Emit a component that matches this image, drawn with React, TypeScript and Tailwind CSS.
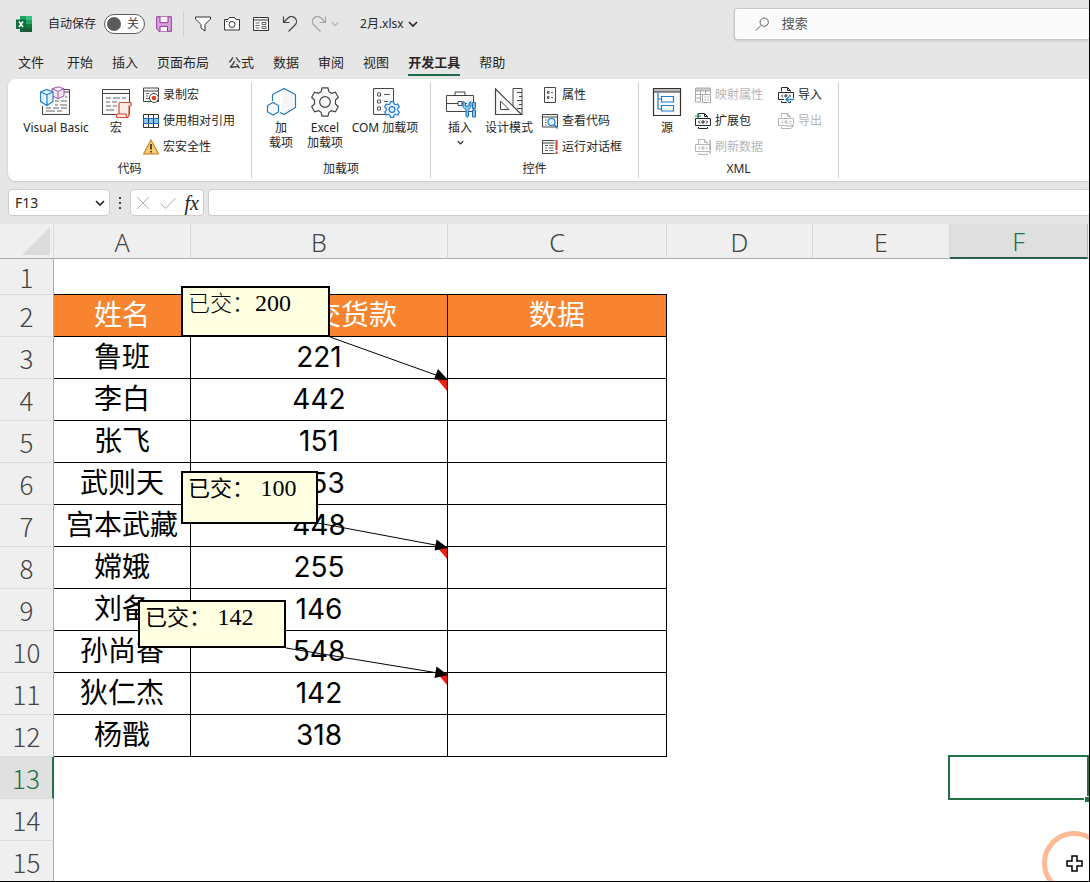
import type { ReactNode } from 'react'
import clsx from 'clsx'

const tabs = ['文件', '开始', '插入', '页面布局', '公式', '数据', '审阅', '视图', '开发工具', '帮助']
const activeTab = '开发工具'

const columns = ['A', 'B', 'C', 'D', 'E', 'F']

const rows: { name: string; amount: string; note?: boolean }[] = [
  { name: '鲁班', amount: '221' },
  { name: '李白', amount: '442', note: true },
  { name: '张飞', amount: '151' },
  { name: '武则天', amount: '253' },
  { name: '宫本武藏', amount: '448' },
  { name: '嫦娥', amount: '255', note: true },
  { name: '刘备', amount: '146' },
  { name: '孙尚香', amount: '548' },
  { name: '狄仁杰', amount: '142', note: true },
  { name: '杨戬', amount: '318' },
]

export default function App() {
  return (
    <div className="flex h-screen flex-col overflow-hidden border-r border-b border-black bg-[#e6e6e6] font-['Noto_Sans','Noto_Sans_CJK_SC',sans-serif] text-xs text-[#262626]">
      <TitleBar />
      <TabBar />
      <Ribbon />
      <FormulaBar />
      <Sheet />
    </div>
  )
}

function TitleBar() {
  return (
    <header className="flex h-12 shrink-0 items-center">
      <div className="flex w-[734px] shrink-0 items-center pl-4">
        <ExcelLogo />
        <label className="ml-4 flex items-center gap-2">
          自动保存
          <span className="relative flex h-5 w-[41px] items-center rounded-full border border-[#5c5c5c] bg-white">
            <input type="checkbox" role="switch" className="absolute inset-0 appearance-none" />
            <span className="ml-[2px] h-[14px] w-[14px] rounded-full bg-[#5c5c5c]"></span>
            <span className="ml-[6px] text-xs leading-none text-[#444]">关</span>
          </span>
        </label>
        <IconButton label="保存" className="ml-[11px]">
          <Icon>
            <path d="M.7.7h14.6v14.6H3L.7 13z" fill="#d9a3dc" stroke="#93379b" />
            <path d="M4 .7v6h8v-6M4 15.3v-5h7.500v5" fill="#f3f3f3" stroke="#93379b" />
          </Icon>
        </IconButton>
        <span className="ml-[11px] h-6 w-px bg-[#cfcfcf]"></span>
        <div className="ml-[11px] flex items-center gap-[13px]">
          <IconButton label="筛选">
            <Icon>
              <path d="M.5 1h15v2L10 8.500v6.500L6 12V8.500L.5 3z" fill="#fff" stroke="#333" />
            </Icon>
          </IconButton>
          <IconButton label="照相机">
            <Icon>
              <path d="M.5 3.500h3.500L5.500 1.500h5L12 3.500h3.500v10.500H.5z" fill="#fff" stroke="#333" />
              <circle cx="8" cy="8.500" r="3" fill="none" stroke="#333" />
              <path d="M2 5.500h1.500" stroke="#333" />
            </Icon>
          </IconButton>
          <IconButton label="记录单">
            <Icon>
              <path d="M.5 1.500h15v13H.5zM.5 4h15" fill="#fff" stroke="#333" />
              <path d="M2.500 7h4M2.500 9.500h4M2.500 12h4M9 6.500h4v2H9zM9 10.500h4v2H9z" fill="none" stroke="#666" />
            </Icon>
          </IconButton>
          <IconButton label="撤消">
            <Icon>
              <path d="M1.500.5v6h6M1.500 6.500 6 2c2-2 5-2 7 0s2 5 0 7l-6.500 6.500" fill="none" stroke="#444" strokeWidth="1.200" />
            </Icon>
          </IconButton>
          <IconButton label="恢复" disabled>
            <Icon>
              <path d="M14.500.5v6h-6M14.500 6.500 10 2C8 0 5 0 3 2S1 7 3 9l6.500 6.500" fill="none" stroke="#a3a3a3" strokeWidth="1.200" />
            </Icon>
          </IconButton>
        </div>
        <Chevron className="ml-1 h-2 w-2 text-[#b3b3b3]" />
        <button type="button" className="ml-[21px] flex items-center gap-1 text-xs">
          2月.xlsx
          <Chevron className="h-[10px] w-[10px]" />
        </button>
      </div>
      <label className="flex h-8 flex-1 items-center rounded-l border border-r-0 border-[#c8c8c8] bg-[#fafafa] pl-5 shadow-sm">
        <svg viewBox="0 0 16 16" className="h-4 w-4" fill="none" stroke="#555">
          <circle cx="10" cy="6" r="4.500" />
          <path d="M6.500 9.500.8 15.200" />
        </svg>
        <input
          type="search"
          aria-label="搜索"
          placeholder="搜索"
          className="ml-3 w-full bg-transparent text-[13px] outline-none placeholder:text-[#555]"
        />
      </label>
    </header>
  )
}

function TabBar() {
  return (
    <nav className="flex h-[31px] shrink-0 items-start gap-[19px] pl-[18px] text-[13px]">
      {tabs.map((tab) => (
        <button
          key={tab}
          type="button"
          className={clsx(
            'h-7 border-b-2 pt-1 whitespace-nowrap',
            tab === '文件' && 'mr-1',
            tab === activeTab ? 'border-[#1e6b4a] font-bold' : 'border-transparent',
          )}
        >
          {tab}
        </button>
      ))}
    </nav>
  )
}

function Ribbon() {
  return (
    <section className="ml-2 flex h-[102px] shrink-0 rounded-l-lg bg-white py-[3px] shadow-sm">
      <Group label="代码" className="w-[244px]">
        <BigButton lines={['Visual Basic']} className="ml-[11px] w-[74px]">
          <path d="M20 3.500h9.500v25h-27V18l10-6z" fill="#fafafa" />
          <path d="M24 3.500h5.500v25h-27V20M24 6h5.500" stroke="#444" />
          <path d="M25 11h2M15 15h4M21 15h6M15 19h3M20 19h7M6 22h5M13 22h6M21 22h6M6 25h9M17 25h5" stroke="#666" />
          <path d="m18 .8 6 2v7l-6 3-6-3v-7zM12 2.800l6 2.500 6-2.500M18 5.300v7.500" fill="#f4e6f5" stroke="#a34fb0" />
          <path d="m7 3.500 6 2.500v9.500l-6 4-6.500-4V6zM.5 6 7 8.500 13 6M7 8.500v11" fill="#e4f2fc" stroke="#2382c9" strokeWidth="1.200" />
        </BigButton>
        <BigButton lines={['宏']} className="w-[46px]">
          <path d="M2.500 3.500h27v25h-27zM2.500 7.500h27" fill="#fafafa" stroke="#444" />
          <path d="M6 12h5M13 12h7M22 12h4M6 16h4M12 16h5M6 20h5M13 20h4M6 24h8" stroke="#666" />
          <path
            d="M20 16.500h10.500c1 0 1 3.500 0 3.500H29v9c0 2-1 2.500-2.500 2.500h-9c-1.500 0-1.500-3.500 0-3.500H19V18c0-1 .5-1.500 1-1.500zM17.500 28h8.500c0 2 .5 3 1.500 3.500"
            fill="#fdece8"
            stroke="#d8492f"
            strokeWidth="1.200"
          />
        </BigButton>
        <div className="ml-1">
          <SmallButton label="录制宏">
            <path d="M.5 1h15v13.500H.5zM.5 4h15" fill="#fafafa" stroke="#444" />
            <path d="M3 6.500h3M3 9h2M3 11.500h3" stroke="#666" />
            <circle cx="11" cy="11" r="4.500" fill="#fff" stroke="#444" />
            <circle cx="11" cy="11" r="2.300" fill="#e03c1e" />
          </SmallButton>
          <SmallButton label="使用相对引用">
            <path d="M.5 1.500h15v13H.5z" fill="#fff" />
            <path d="M.5 5.500h15v5H.5z" fill="#83c5f3" />
            <path d="M.5 1.500h15v13H.5zM.5 5.500h15M.5 10.500h15M5.500 1.500v13M10.500 1.500v13" fill="none" stroke="#333" />
            <path d="M.5 5.500h15v5H.5z" fill="none" stroke="#1e6fb8" />
          </SmallButton>
          <SmallButton label="宏安全性">
            <path d="M8 1 15.300 14.800H.7z" fill="#fbd075" stroke="#cf8420" strokeWidth="1.200" />
            <path d="M8 5v5.500M8 12v1.500" stroke="#222" strokeWidth="1.500" />
          </SmallButton>
        </div>
      </Group>

      <Group label="加载项" className="w-[179px]">
        <BigButton lines={['加', '载项']} className="ml-[5px] w-12">
          <path d="m19 2.500 11.500 6v13L19 28.500l-4-2M7.500 14V8.500z" fill="#f5f5f5" />
          <path d="M7.500 15V8.500L19 2.500l11.500 6v13L19 28.500l-4-2" fill="none" stroke="#2579bd" strokeWidth="1.200" />
          <path d="m8 16.500 5.500 3v6.500L8 29l-5.500-3v-6.500z" fill="#f8fbfd" stroke="#2579bd" strokeWidth="1.200" />
        </BigButton>
        <BigButton lines={['Excel', '加载项']} className="w-10">
          <g transform="translate(16 16) scale(1.180) translate(-12 -12)" fill="#fafafa" stroke="#444">
            <GearShape />
          </g>
        </BigButton>
        <BigButton lines={['COM 加载项']} className="w-20">
          <path d="M4.500 2.500h20v26h-20z" fill="#fafafa" stroke="#444" />
          <path d="M8.500 7h3v3h-3zM8.500 14h3v3h-3zM8.500 21h3v3h-3zM15 8.500h6M15 15.500h4" fill="none" stroke="#555" />
          <g transform="translate(23 23.500) scale(.65) translate(-12 -12)" fill="#e6f3fc" stroke="#1c7cd0" strokeWidth="1.800">
            <GearShape />
          </g>
        </BigButton>
      </Group>

      <Group label="控件" className="w-[208px]">
        <BigButton lines={['插入']} className="ml-[5px] w-12" menu>
          <path d="M2.500 9.500h27v16h-27zM11 9.500V6h10v3.500M2.500 17.500H14M18 17.500h5M14 15.500h4v4h-4z" fill="#fafafa" stroke="#444" />
          <path d="M19 15.500v5c0 2 3 2 3 4v5.500c0 1.500 2.500 1.500 2.500 0v-5.500c0-2 2.500-2 2.500-4v-5l-2 1.500v3h-3.500v-3z" fill="#83c5f3" stroke="#1b6fb5" />
          <path d="M28.500 16.500h3v6h-3zM28.500 24h3v7h-3z" fill="#83c5f3" stroke="#1b6fb5" />
        </BigButton>
        <BigButton lines={['设计模式']} className="w-[50px]">
          <path d="M20 2.500h9v26h-9z" fill="#fafafa" stroke="#444" />
          <path d="M24 6.500h5M26 10.500h3M24 14.500h5M26 18.500h3M24 22.500h5" stroke="#444" />
          <path d="M2.500 3v25.500h26z" fill="#fafafa" stroke="#444" strokeWidth="1.200" />
          <path d="M7.500 15v8.500h8.500z" fill="#fff" stroke="#444" />
        </BigButton>
        <div className="ml-2">
          <SmallButton label="属性">
            <path d="M2.500.5h11v15h-11z" fill="#fafafa" stroke="#444" />
            <path d="M5.500 4.500h1.500v2H5.500zM5.500 9.500h1.500v2H5.500zM9 5.500h2M9 10.500h2" fill="none" stroke="#555" />
          </SmallButton>
          <SmallButton label="查看代码">
            <path d="M.5 1.500h15v12.500H.5zM.5 4h15" fill="#fafafa" stroke="#444" />
            <path d="M3 7h1.500M3 9.500h1.500M3 12h1.500" stroke="#666" />
            <circle cx="9.500" cy="9" r="3.500" fill="#e4f2fc" stroke="#1c7cd0" strokeWidth="1.200" />
            <path d="m12 11.500 3.500 4" stroke="#1c7cd0" strokeWidth="1.400" />
          </SmallButton>
          <SmallButton label="运行对话框">
            <path d="M12.500 1.500H.5v13h12M.5 4h12" fill="#fafafa" stroke="#444" />
            <path d="M3 6.500h3M7.500 6.500h4M3 9h2M6.500 9h5M3 11.500h3M7.500 11.500h4" stroke="#666" />
            <path d="M14.500 1v10M14.500 12.500v2.500" stroke="#e23b24" strokeWidth="2" />
          </SmallButton>
        </div>
      </Group>

      <Group label="XML" className="w-[200px]">
        <BigButton lines={['源']} className="ml-2 w-10">
          <path d="M2.500 2.500h27v27h-27z" fill="#fafafa" stroke="#333" strokeWidth="1.200" />
          <path d="M2.500 2.500h27V6h-27z" fill="#bbb" stroke="#333" />
          <path d="M7 6.500v16.500h3M7 13h3M10.500 10.500h12V16h-12zM10.500 19.500h12V25h-12z" fill="none" stroke="#1c7cd0" strokeWidth="1.200" />
        </BigButton>
        <div className="ml-2 flex gap-[15px]">
          <div>
            <SmallButton label="映射属性" disabled>
              <path d="M.5 1h15v3H.5z" fill="#ccc" stroke="#aaa" />
              <path d="M.5 4v11H6M.5 7.500H7M.5 11H6M5.500 4v11M10.500 4v3M15.500 4v3M7.500 7.500h8v8h-8zM9.500 10h1.500M12.500 10h1.500M9.500 13h1.500M12.500 13h1.500" fill="none" stroke="#aaa" />
            </SmallButton>
            <SmallButton label="扩展包">
              <XmlPage />
              <path d="M3 0v6M0 3h6" stroke="#1e8a4a" strokeWidth="1.200" />
            </SmallButton>
            <SmallButton label="刷新数据" disabled>
              <XmlPage />
              <path d="M15 1v10M15 12.500v2" stroke="#aaa" strokeWidth="1.500" />
            </SmallButton>
          </div>
          <div>
            <SmallButton label="导入">
              <XmlPage />
              <path d="M16 12.500H8M11 9.500l-3 3 3 3" fill="none" stroke="#fff" strokeWidth="3" />
              <path d="M16 12.500H8M11 9.500l-3 3 3 3" fill="none" stroke="#1c86dd" strokeWidth="1.300" />
            </SmallButton>
            <SmallButton label="导出" disabled>
              <XmlPage />
              <path d="M8 13h7.500M13 10.500l2.500 2.500-2.500 2.500" fill="none" stroke="#fff" strokeWidth="3" />
              <path d="M8 13h7.500M13 10.500l2.500 2.500-2.500 2.500" fill="none" stroke="#aaa" />
            </SmallButton>
          </div>
        </div>
      </Group>
    </section>
  )
}

function FormulaBar() {
  return (
    <div className="flex h-[43px] shrink-0 items-center pl-2">
      <div className="flex h-[27px] w-[102px] items-center rounded border border-[#cdcdcd] bg-white">
        <input aria-label="名称框" defaultValue="F13" className="min-w-0 flex-1 pl-[6px] text-sm outline-none" />
        <button type="button" aria-label="打开名称列表" className="mr-1">
          <Chevron className="h-[10px] w-[10px]" />
        </button>
      </div>
      <svg viewBox="0 0 4 12" className="mx-2 h-3 w-1" fill="#444">
        <path d="M1 0h2v2H1zM1 5h2v2H1zM1 10h2v2H1z" />
      </svg>
      <div className="flex h-[27px] w-[74px] items-center justify-between rounded border border-[#cdcdcd] bg-white px-1">
        <button type="button" aria-label="取消" disabled>
          <svg viewBox="0 0 16 16" className="h-4 w-4" stroke="#b0b0b0">
            <path d="m2 2 12 12M14 2 2 14" />
          </svg>
        </button>
        <button type="button" aria-label="输入" disabled>
          <svg viewBox="0 0 16 16" className="h-4 w-4" fill="none" stroke="#b0b0b0">
            <path d="m.5 8.500 5 5L15.500 3" />
          </svg>
        </button>
        <button type="button" aria-label="插入函数" className="font-['Liberation_Serif',serif] text-xl leading-none text-[#222] italic">
          fx
        </button>
      </div>
      <input aria-label="编辑栏" className="ml-1 h-[27px] flex-1 rounded-l border border-r-0 border-[#cdcdcd] bg-white px-2 text-sm outline-none" />
    </div>
  )
}

function Sheet() {
  return (
    <main className="relative flex-1 overflow-hidden bg-white">
      <table className="w-full table-fixed border-separate border-spacing-0 text-center text-[28px] leading-8 text-black">
        <colgroup>
          <col className="w-[54px]" />
          <col className="w-[137px]" />
          <col className="w-[257px]" />
          <col className="w-[219px]" />
          <col className="w-[146px]" />
          <col className="w-[137px]" />
          <col className="w-[138px]" />
          <col />
        </colgroup>
        <thead>
          <tr className="h-[35px] bg-[#efefef] font-['Noto_Sans',sans-serif] text-[25px] text-[#444]">
            <td className="border-r border-b border-r-[#dcdcdc] border-b-[#ababab] p-0">
              <svg viewBox="0 0 28 28" className="mr-[3px] ml-auto h-7 w-7" fill="#dcdcdc">
                <path d="M28 0v28H0z" />
              </svg>
            </td>
            {columns.map((column) => (
              <th
                key={column}
                scope="col"
                className={clsx(
                  'border-r p-0 pt-[2px] font-light',
                  column === 'F'
                    ? 'border-b-2 border-r-[#b5b5b5] border-b-[#2b6149] bg-[#dfdfdf] leading-[31px] text-[#217346]'
                    : 'border-b border-r-[#d6d6d6] border-b-[#ababab]',
                )}
              >
                {column}
              </th>
            ))}
            <td className="border-b border-[#ababab] p-0"></td>
          </tr>
        </thead>
        <tbody>
          <tr className="h-9">
            <RowHeader index={1} />
            <td className="border-b border-black p-0"></td>
            <td className="border-b border-black p-0"></td>
            <td className="border-b border-black p-0"></td>
            <td colSpan={4} className="p-0"></td>
          </tr>
          <tr className="h-[42px]">
            <RowHeader index={2} />
            <HeadCell>姓名</HeadCell>
            <HeadCell>2月应交货款</HeadCell>
            <HeadCell>数据</HeadCell>
            <td colSpan={4} className="p-0"></td>
          </tr>
          {rows.map((row, i) => (
            <tr key={row.name} className="h-[42px]">
              <RowHeader index={i + 3} />
              <td className="border-r border-b border-black p-0 pb-[3px] whitespace-nowrap">{row.name}</td>
              <td className="relative border-r border-b border-black p-0 pb-[2px] font-['Inter',sans-serif]">
                {row.amount}
                {row.note && (
                  <svg viewBox="0 0 10 12" className="absolute top-0 right-0 h-3 w-[10px]" fill="#f01e0a">
                    <path d="M0 0h10v12z" />
                  </svg>
                )}
              </td>
              <td className="border-r border-b border-black p-0"></td>
              <td colSpan={4} className="p-0"></td>
            </tr>
          ))}
          <tr className="h-[42px]">
            <RowHeader index={13} selected />
            <td colSpan={5} className="p-0"></td>
            <td className="relative p-0">
              <div className="absolute -top-[2px] -right-px -bottom-px -left-[2px] border-2 border-[#217346]"></div>
              <div className="absolute -right-[2px] -bottom-[3px] h-[6px] w-[6px] border-t border-l border-white bg-[#217346]"></div>
            </td>
            <td className="p-0"></td>
          </tr>
          {[14, 15].map((index) => (
            <tr key={index} className="h-[42px]">
              <RowHeader index={index} />
              <td colSpan={7} className="p-0"></td>
            </tr>
          ))}
        </tbody>
      </table>

      {/* comment connectors */}
      <svg viewBox="0 0 460 480" className="pointer-events-none absolute top-0 left-0 h-[480px] w-[460px]" stroke="#000">
        <path d="M330 113 440 152.500M318 299l120 22.500M286 424l152 25" />
        <path d="m448 156-14-.5 4-10.500zM448 324l-13.500 2.500 2-11zM448 451l-13.500 3 2-11.500z" stroke="none" />
      </svg>
      <Note className="top-[62px] left-[181px] h-[51px] w-[149px] font-light" text="已交：" amount="200" />
      <Note className="top-[247px] left-[181px] h-[53px] w-[137px]" text="已交： " amount="100" />
      <Note className="top-[376px] left-[138px] h-[48px] w-[148px]" text="已交： " amount="142" />

      {/* highlighted mouse pointer */}
      <svg viewBox="0 0 64 64" className="pointer-events-none absolute top-[607px] left-[1042px] h-16 w-16">
        <circle cx="32" cy="32" r="29.500" fill="none" stroke="#fdba94" strokeWidth="5" />
        <path d="M30 25h5v5h5v5h-5v5h-5v-5h-5v-5h5z" fill="#fff" stroke="#000" strokeWidth="1.500" />
      </svg>
    </main>
  )
}

function RowHeader({ index, selected = false }: { index: number; selected?: boolean }) {
  return (
    <th
      scope="row"
      className={clsx(
        "border-b border-b-[#dcdcdc] p-0 font-['Noto_Sans_CJK_SC',sans-serif] text-[26px] leading-7 font-light",
        selected ? 'border-r-2 border-r-[#217346] bg-[#e0e0e0] text-[#217346]' : 'border-r border-r-[#ababab] bg-[#efefef] text-[#444]',
      )}
    >
      {index}
    </th>
  )
}

function HeadCell({ children }: { children: ReactNode }) {
  return <td className="border-r border-b border-black bg-[#f88430] p-0 pb-[3px] whitespace-nowrap text-white">{children}</td>
}

function Note({ text, amount, className }: { text: string; amount: string; className: string }) {
  return (
    <aside
      className={clsx(
        "absolute border-2 border-black bg-[#ffffe1] pl-[5px] font-['Liberation_Serif','Noto_Sans_CJK_SC',serif] text-[22px] leading-8 whitespace-pre text-black",
        className,
      )}
    >
      {text}
      <span className="ml-px text-2xl leading-7">{amount}</span>
    </aside>
  )
}

function Group({ label, className, children }: { label: string; className: string; children: ReactNode }) {
  return (
    <div className={clsx('flex shrink-0 flex-col border-r border-[#d0d0d0]', className)}>
      <div className="flex h-[78px]">{children}</div>
      <p className="text-center leading-[18px]">{label}</p>
    </div>
  )
}

type BigButtonProps = { lines: string[]; className: string; menu?: boolean; children: ReactNode }

function BigButton({ lines, className, menu = false, children }: BigButtonProps) {
  return (
    <button type="button" className={clsx('flex flex-col items-center pt-1 leading-[15px] whitespace-nowrap', className)}>
      <svg viewBox="0 0 32 32" className="mb-[2px] h-8 w-8 shrink-0" fill="none">
        {children}
      </svg>
      {lines.map((line) => (
        <span key={line}>{line}</span>
      ))}
      {menu && <Chevron className="mt-1 h-[7px] w-[7px]" />}
    </button>
  )
}

function SmallButton({ label, disabled = false, children }: { label: string; disabled?: boolean; children: ReactNode }) {
  return (
    <button
      type="button"
      disabled={disabled}
      className="flex h-[26px] items-center gap-1 whitespace-nowrap disabled:text-[#b5b5b5]"
    >
      <Icon>{children}</Icon>
      {label}
    </button>
  )
}

type IconButtonProps = { label: string; className?: string; disabled?: boolean; children: ReactNode }

function IconButton({ label, className, disabled, children }: IconButtonProps) {
  return (
    <button type="button" aria-label={label} disabled={disabled} className={className}>
      {children}
    </button>
  )
}

function Icon({ children }: { children: ReactNode }) {
  return (
    <svg viewBox="0 0 16 16" className="h-4 w-4 shrink-0" fill="none">
      {children}
    </svg>
  )
}

function XmlPage() {
  return (
    <g fill="none" stroke="currentColor">
      <path d="M3.500 4.500V.5h6l3 3v1M9.500.5v3h3M.5 5.500v7h15v-7zM3.500 14v1.500h9V14" />
      <path d="M5 7.500 3.500 9 5 10.500M11 7.500 12.500 9 11 10.500M7 8h2v2H7z" />
    </g>
  )
}

// drawn around (12, 12)
function GearShape() {
  return (
    <>
      <path d="M9.500 0h5l.8 3.300 2.200 1.300 3.300-1L23.300 8l-2.400 2.400v3.200l2.400 2.400-2.500 4.400-3.300-1-2.200 1.300-.8 3.300h-5l-.8-3.300-2.200-1.300-3.300 1L.7 16l2.400-2.400v-3.200L.7 8l2.500-4.400 3.300 1 2.200-1.300z" />
      <circle cx="12" cy="12" r="4.500" />
    </>
  )
}

function Chevron({ className }: { className: string }) {
  return (
    <svg viewBox="0 0 10 10" className={className} fill="none" stroke="currentColor" strokeWidth="1.600">
      <path d="m1 3 4 4 4-4" />
    </svg>
  )
}

function ExcelLogo() {
  return (
    <svg viewBox="0 0 16 16" className="h-4 w-4">
      <path d="M4 0h12v16H4z" fill="#185c37" />
      <path d="M4 0h6v4H4z" fill="#21a366" />
      <path d="M10 0h6v4h-6z" fill="#33c481" />
      <path d="M10 4h6v4h-6z" fill="#21a366" />
      <path d="M4 4h6v4H4zM10 8h6v4h-6z" fill="#107c41" />
      <path d="M0 3.500h10v9.500H0z" fill="#0f703b" />
      <path d="m3 5.500 4 5.500M7 5.500 3 11" stroke="#fff" strokeWidth="1.500" />
    </svg>
  )
}
